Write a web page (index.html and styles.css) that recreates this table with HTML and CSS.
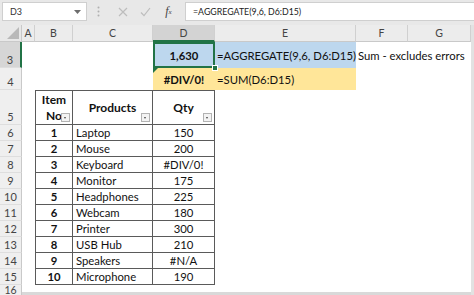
FILE: index.html
```html
<!DOCTYPE html>
<html lang="en">
<head>
    <meta charset="UTF-8">
    <title>AGGREGATE - Sum excluding errors</title>
    <link rel="stylesheet" href="styles.css">
</head>
<body>
    <div class="formula-bar">
        <div class="name-box">
            <span>D3</span>
            <svg class="caret" width="7" height="4" viewBox="0 0 7 4"><path d="M0 0h7L3.5 4z" fill="#6d6d6d"/></svg>
        </div>
        <div class="grip">
            <svg width="3" height="11" viewBox="0 0 3 11"><circle cx="1.5" cy="1.5" r="1" fill="#b0b0b0"/><circle cx="1.5" cy="5.5" r="1" fill="#b0b0b0"/><circle cx="1.5" cy="9.5" r="1" fill="#b0b0b0"/></svg>
        </div>
        <div class="fx-buttons">
            <span class="fx-btn">
                <svg width="10" height="10" viewBox="0 0 10 10"><path d="M1 1l8 8M9 1l-8 8" stroke="#bdbdbd" stroke-width="1.2"/></svg>
            </span>
            <span class="fx-btn">
                <svg width="11" height="10" viewBox="0 0 11 10"><path d="M1 5.5l3 3.2L10 1" fill="none" stroke="#bdbdbd" stroke-width="1.2"/></svg>
            </span>
            <span class="fx-btn fx-label">f<sub>x</sub></span>
        </div>
        <div class="formula-input">=AGGREGATE(9,6, D6:D15)</div>
    </div>

    <div class="sheet">
        <div class="vscroll"></div>

        <!-- column headers -->
        <div class="corner">
            <svg width="12" height="12" viewBox="0 0 12 12"><path d="M12 0v12H0z" fill="#b9b9b9"/></svg>
        </div>
        <div class="col-head">A</div>
        <div class="col-head">B</div>
        <div class="col-head">C</div>
        <div class="col-head selected">D</div>
        <div class="col-head">E</div>
        <div class="col-head">F</div>
        <div class="col-head">G</div>

        <!-- row 3: AGGREGATE result -->
        <div class="rh selected">3</div>
        <div class="cell cd fill-blue bold center active">1,630</div>
        <div class="cell ce fill-blue">=AGGREGATE(9,6, D6:D15)</div>
        <div class="cell cf">Sum - excludes errors</div>

        <!-- row 4: plain SUM fails -->
        <div class="rh">4</div>
        <div class="cell cd fill-yellow bold center flagged">#DIV/0!</div>
        <div class="cell ce fill-yellow">=SUM(D6:D15)</div>

        <!-- row 5: table header -->
        <div class="rh">5</div>
        <div class="th cb">Item<br>No<span class="filter"></span></div>
        <div class="th cc">Products<span class="filter"></span></div>
        <div class="th cd">Qty<span class="filter"></span></div>

        <div class="rh">6</div>
        <div class="td cb bold center">1</div>
        <div class="td cc">Laptop</div>
        <div class="td cd center">150</div>

        <div class="rh">7</div>
        <div class="td cb bold center">2</div>
        <div class="td cc">Mouse</div>
        <div class="td cd center">200</div>

        <div class="rh">8</div>
        <div class="td cb bold center">3</div>
        <div class="td cc">Keyboard</div>
        <div class="td cd center">#DIV/0!</div>

        <div class="rh">9</div>
        <div class="td cb bold center">4</div>
        <div class="td cc">Monitor</div>
        <div class="td cd center">175</div>

        <div class="rh">10</div>
        <div class="td cb bold center">5</div>
        <div class="td cc">Headphones</div>
        <div class="td cd center">225</div>

        <div class="rh">11</div>
        <div class="td cb bold center">6</div>
        <div class="td cc">Webcam</div>
        <div class="td cd center">180</div>

        <div class="rh">12</div>
        <div class="td cb bold center">7</div>
        <div class="td cc">Printer</div>
        <div class="td cd center">300</div>

        <div class="rh">13</div>
        <div class="td cb bold center">8</div>
        <div class="td cc">USB Hub</div>
        <div class="td cd center">210</div>

        <div class="rh">14</div>
        <div class="td cb bold center">9</div>
        <div class="td cc">Speakers</div>
        <div class="td cd center">#N/A</div>

        <div class="rh">15</div>
        <div class="td cb bold center">10</div>
        <div class="td cc">Microphone</div>
        <div class="td cd center">190</div>

        <div class="rh last">16</div>
        <div class="hscroll"></div>
    </div>
</body>
</html>
```

FILE: styles.css
```css
body {
    margin: 0;
    width: 474px;
    height: 295px;
    overflow: hidden;
    background-color: white;
    font-family: Lato, "Liberation Sans", sans-serif;
    color: #111;
}

/* formula bar */
.formula-bar {
    display: flex;
    align-items: flex-start;
    height: 25px;
    padding: 2px 0 0 2px;
    box-sizing: border-box;
    background-color: #e8e8e8;
}
.name-box {
    display: flex;
    align-items: center;
    justify-content: space-between;
    width: 85px;
    height: 19px;
    padding: 0 5px 0 7px;
    box-sizing: border-box;
    background-color: white;
    border: 1px solid #cfcfcf;
    font-size: 9px;
    color: #333;
}
.grip {
    display: flex;
    justify-content: center;
    align-items: center;
    width: 22px;
    height: 19px;
}
.fx-buttons {
    display: flex;
    margin-left: 2px;
}
.fx-btn {
    display: flex;
    justify-content: center;
    align-items: center;
    width: 23px;
    height: 19px;
}
.fx-label {
    font-family: "Liberation Serif", serif;
    font-style: italic;
    font-size: 12px;
    color: #444;
}
.fx-label sub {
    font-size: 7px;
    vertical-align: -1px;
}
.formula-input {
    flex: 1;
    height: 19px;
    margin-left: 5px;
    padding-left: 7px;
    box-sizing: border-box;
    background-color: white;
    border: 1px solid #cfcfcf;
    border-right: none;
    font-size: 8.8px;
    line-height: 17px;
    color: #222;
}

/* sheet grid */
.sheet {
    display: grid;
    grid-template-columns: 22px 13px 38px 80px 62px 141px 52px 63px 3px;
    grid-template-rows: 17px 26px 22px 35px repeat(10, 16px) 10px;
    font-size: 11.3px;
}
.vscroll {
    grid-column: 9;
    grid-row: 1 / -1;
    background-color: #e2e2e2;
}
.hscroll {
    grid-column: 2 / 9;
    align-self: end;
    height: 3px;
    background-color: #d9d9d9;
}
.corner {
    display: flex;
    justify-content: flex-end;
    align-items: flex-end;
    padding: 0 2px 2px 0;
    background-color: #e8e8e8;
    border-right: 1px solid #c9c9c9;
    border-bottom: 1px solid #c9c9c9;
}
.col-head {
    display: flex;
    justify-content: center;
    align-items: center;
    background-color: #ececec;
    border-right: 1px solid #d0d0d0;
    border-bottom: 1px solid #c9c9c9;
    font-size: 10.5px;
    color: #444;
}
.col-head.selected {
    background-color: #d3d3d3;
    border-bottom: 2px solid #217346;
}
.rh {
    grid-column: 1;
    display: flex;
    justify-content: center;
    align-items: flex-end;
    padding-bottom: 1px;
    background-color: #efefef;
    border-right: 1px solid #c9c9c9;
    border-bottom: 1px solid #dedede;
    font-size: 11px;
    color: #444;
}
.rh.selected {
    background-color: #d6d6d6;
    border-right: 2px solid #217346;
}
.rh.last {
    align-items: flex-start;
    padding: 1px 0 0;
    line-height: 9px;
    font-size: 10.5px;
    border-bottom: none;
}

/* column placement */
.cb { grid-column: 3; }
.cc { grid-column: 4; }
.cd { grid-column: 5; }
.ce { grid-column: 6; }
.cf { grid-column: 7 / span 2; }

.cell {
    display: flex;
    align-items: center;
    padding: 0 2px;
    white-space: nowrap;
}
.fill-blue {
    background-color: #bdd7ee;
}
.fill-yellow {
    background-color: #ffe699;
}
.bold {
    font-weight: bold;
}
.center {
    justify-content: center;
}
.active {
    position: relative;
    box-shadow: inset 0 0 0 2px #217346;
}
.active::after {
    content: "";
    position: absolute;
    right: -3px;
    bottom: -3px;
    width: 4px;
    height: 4px;
    background-color: #217346;
    border: 1px solid white;
    z-index: 2;
}
.flagged {
    position: relative;
}
.flagged::before {
    content: "";
    position: absolute;
    left: 0;
    top: 0;
    border-top: 5px solid #217346;
    border-right: 5px solid transparent;
}

/* products table */
.th,
.td {
    display: flex;
    align-items: center;
    padding: 0 3px;
    border-right: 1px solid #5a5a5a;
    border-bottom: 1px solid #5a5a5a;
    white-space: nowrap;
}
.th {
    position: relative;
    justify-content: center;
    text-align: center;
    line-height: 16px;
    font-size: 12px;
    font-weight: bold;
    border-top: 1px solid #5a5a5a;
}
.th.cb,
.td.cb {
    border-left: 1px solid #5a5a5a;
}
.filter {
    position: absolute;
    right: 2px;
    bottom: 2px;
    width: 9px;
    height: 9px;
    box-sizing: border-box;
    background-color: #f3f3f3;
    border: 1px solid #b3b3b3;
}
.filter::after {
    content: "";
    position: absolute;
    left: 2px;
    top: 3px;
    border-top: 2px solid #444;
    border-left: 1.5px solid transparent;
    border-right: 1.5px solid transparent;
}
```
